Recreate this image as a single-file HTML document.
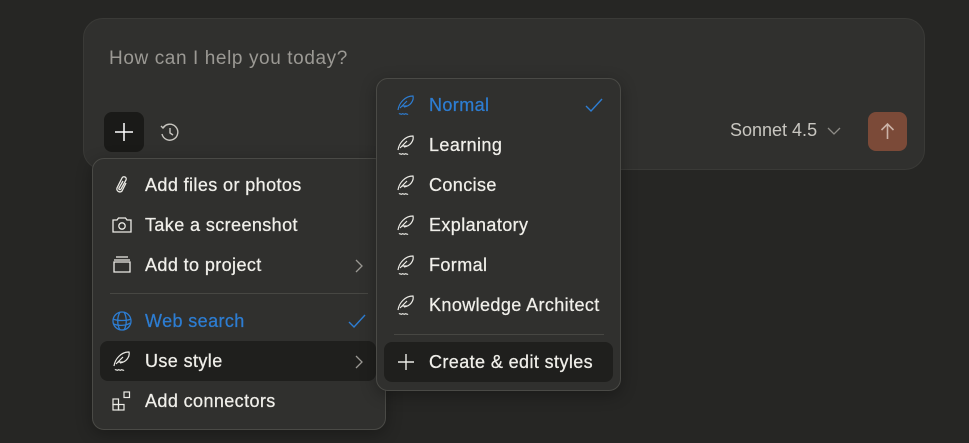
<!DOCTYPE html>
<html><head><style>
*{margin:0;padding:0;box-sizing:border-box}
body{width:969px;height:443px;background:#262624;font-family:"Liberation Sans",sans-serif;position:relative;overflow:hidden;color:#ecebe6}
.abs{position:absolute}
.comp{left:83px;top:18px;width:842px;height:152px;background:#30302e;border:1px solid #3a3a37;border-radius:20px}
.ph{left:109px;top:48px;font-size:19px;letter-spacing:0.6px;color:#9b9994}
.plus{left:104px;top:112px;width:40px;height:40px;background:#1a1a18;border-radius:8px}
.menu{background:#30302e;border:1px solid #4a4a46;border-radius:12px;box-shadow:0 4px 16px rgba(0,0,0,.3)}
.item{position:absolute;font-size:18px;letter-spacing:0.4px;color:#f0efea;height:40px;line-height:40px;-webkit-text-stroke:0.25px currentColor}
.hl{position:absolute;background:#1f1f1d;border-radius:8px}
.sep{position:absolute;height:1px;background:#474743}
.blue{color:#2d7dd2}
</style></head><body>
<div class="abs comp"></div>
<div class="abs ph">How can I help you today?</div>
<div class="abs plus"><svg width="40" height="40"><path d="M20 11v18M11 20h18" stroke="#fff" stroke-width="1.5"/></svg></div>
<svg class="abs" style="left:159px;top:122px" width="20" height="20" fill="none" stroke="#c8c6c0" stroke-width="1.4"><path d="M4 6A8 8 0 1 1 3 12"/><path d="M2 4l2 2 2-2"/><path d="M11 6v5l3 2"/></svg>
<div class="abs" style="left:730px;top:120px;font-size:18px;color:#c8c6c0">Sonnet 4.5</div>
<svg class="abs" style="left:827px;top:126px" width="14" height="10" fill="none" stroke="#8e8c87" stroke-width="1.3"><path d="M1 2l6 6 6-6"/></svg>
<div class="abs" style="left:868px;top:112px;width:39px;height:39px;background:#7b4a38;border-radius:8px"><svg width="39" height="39" fill="none" stroke="#cbb3a8" stroke-width="1.6"><path d="M19.5 27V12M13.5 18l6-6 6 6"/></svg></div>

<div class="abs menu" style="left:92px;top:158px;width:294px;height:272px"></div>
<div class="hl" style="left:100px;top:341px;width:276px;height:40px"></div>
<div class="sep" style="left:110px;top:293px;width:258px"></div>
<svg class="abs" style="left:111px;top:174px" width="22" height="22" fill="none" stroke="#ecebe6" stroke-width="1.3"><path d="M15 9l-4 8a3 3 0 0 1-5-3l5-10a2 2 0 0 1 4 2l-5 9a1 1 0 0 1-2-1l4-7"/></svg>
<div class="item" style="left:145px;top:165px">Add files or photos</div>
<svg class="abs" style="left:111px;top:214px" width="22" height="22" fill="none" stroke="#ecebe6" stroke-width="1.3"><path d="M2 6h4l1.5-2h7L16 6h4v12H2z"/><circle cx="11" cy="12" r="3.2"/></svg>
<div class="item" style="left:145px;top:205px">Take a screenshot</div>
<svg class="abs" style="left:111px;top:254px" width="22" height="22" fill="none" stroke="#ecebe6" stroke-width="1.3"><path d="M5 3h12M3 6h16M3 8h16v10H3z"/></svg>
<div class="item" style="left:145px;top:245px">Add to project</div>
<svg class="abs" style="left:354px;top:259px" width="10" height="14" fill="none" stroke="#9b9994" stroke-width="1.3"><path d="M2 1l6 6-6 6"/></svg>
<svg class="abs" style="left:111px;top:310px" width="22" height="22" fill="none" stroke="#2d7dd2" stroke-width="1.3"><circle cx="11" cy="11" r="9"/><path d="M2 9c4 2 14 2 18 0M3 14c4 2 12 2 16-1M9 2c-3 5-3 13 0 18M13 2c3 5 3 13 0 18"/></svg>
<div class="item blue" style="left:145px;top:301px">Web search</div>
<svg class="abs" style="left:348px;top:314px" width="18" height="14" fill="none" stroke="#2d7dd2" stroke-width="1.4"><path d="M1 8l5 5L17 1"/></svg>
<svg class="abs" style="left:111px;top:350px" width="22" height="22" fill="none" stroke="#ecebe6" stroke-width="1.2"><path d="M3 16C4 9 10 2 18 2c1 4-2 10-9 11M5 14l7-7M7 12h5"/><path d="M4 20c1-1 2 1 3 0s2 1 3 0 2 1 3 0"/></svg>
<div class="item" style="left:145px;top:341px">Use style</div>
<svg class="abs" style="left:354px;top:355px" width="10" height="14" fill="none" stroke="#9b9994" stroke-width="1.3"><path d="M2 1l6 6-6 6"/></svg>
<svg class="abs" style="left:111px;top:390px" width="22" height="22" fill="none" stroke="#ecebe6" stroke-width="1.2"><rect x="2" y="9" width="5.5" height="5.5"/><rect x="2" y="14.5" width="5.5" height="5.5"/><rect x="7.5" y="14.5" width="5.5" height="5.5"/><rect x="13" y="2" width="5.5" height="5.5"/></svg>
<div class="item" style="left:145px;top:381px">Add connectors</div>

<div class="abs menu" style="left:376px;top:78px;width:245px;height:313px"></div>
<div class="sep" style="left:394px;top:334px;width:210px"></div>
<div class="hl" style="left:384px;top:342px;width:229px;height:40px"></div>
<svg class="abs" style="left:585px;top:98px" width="18" height="14" fill="none" stroke="#2d7dd2" stroke-width="1.4"><path d="M1 8l5 5L17 1"/></svg>
<div id="r"></div>
<svg class="abs" style="left:396px;top:352px" width="20" height="20" fill="none" stroke="#ecebe6" stroke-width="1.4"><path d="M10 2v16M2 10h16"/></svg>
<div class="item" style="left:429px;top:342px">Create &amp; edit styles</div>
<script>
var n=["Normal","Learning","Concise","Explanatory","Formal","Knowledge Architect"],h="";
n.forEach(function(t,i){var y=85+i*40,c=i?"#ecebe6":"#2d7dd2";
h+='<svg class="abs" style="left:395px;top:'+(y+9)+'px" width="22" height="22" fill="none" stroke="'+c+'" stroke-width="1.2"><path d="M3 16C4 9 10 2 18 2c1 4-2 10-9 11M5 14l7-7M7 12h5"/><path d="M4 20c1-1 2 1 3 0s2 1 3 0 2 1 3 0"/></svg><div class="item'+(i?'':' blue')+'" style="left:429px;top:'+y+'px">'+t+'</div>';});
document.getElementById('r').outerHTML=h;
</script>
</body></html>
